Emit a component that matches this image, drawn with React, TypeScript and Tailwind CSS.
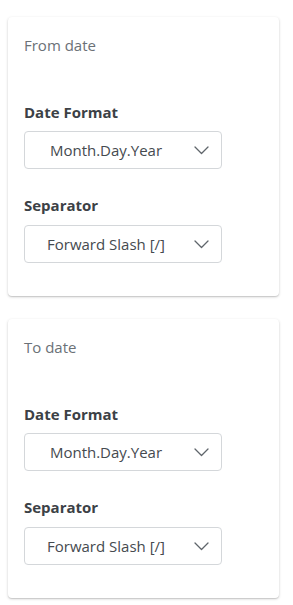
interface SelectProps {
  value: string
}

function FakeSelect({ value }: SelectProps) {
  return (
    <div className="relative flex h-[38px] w-[198px] items-center rounded-[4px] border border-[#d4d7da] bg-white pr-[34px]">
      <span className="flex-1 text-center text-[15px] text-[#454a4f]">{value}</span>
      {/* chevron */}
      <svg
        className="absolute right-[12px] top-[14px]"
        width="15"
        height="9"
        viewBox="0 0 15 9"
        fill="none"
        stroke="#5f656b"
        strokeWidth="1.3"
        strokeLinecap="round"
        strokeLinejoin="round"
      >
        <polyline points="1,1 7.5,7.5 14,1" />
      </svg>
    </div>
  )
}

function DateCard({ title }: { title: string }) {
  return (
    <div className="w-[271px] rounded-[4px] bg-white pl-[16px] pt-[18px] pb-[33px] shadow-[0_1px_3px_rgba(0,0,0,0.18),0_1px_1px_rgba(0,0,0,0.1)]">
      <div className="h-[20px] text-[15px] leading-[20px] text-[#6b7177]">{title}</div>

      <div className="mt-[47px] h-[20px] text-[15px] font-bold leading-[20px] text-[#3c4146]">Date Format</div>
      <div className="mt-[9px]">
        <FakeSelect value="Month.Day.Year" />
      </div>

      <div className="mt-[26px] h-[20px] text-[15px] font-bold leading-[20px] text-[#3c4146]">Separator</div>
      <div className="mt-[10px]">
        <FakeSelect value="Forward Slash [/]" />
      </div>
    </div>
  )
}

export default function App() {
  return (
    <div className="min-h-screen bg-white pt-[17px] pl-[8px] font-['Open_Sans','Noto_Sans',sans-serif]">
      <div className="flex flex-col gap-[23px]">
        <DateCard title="From date" />
        <DateCard title="To date" />
      </div>
    </div>
  )
}
